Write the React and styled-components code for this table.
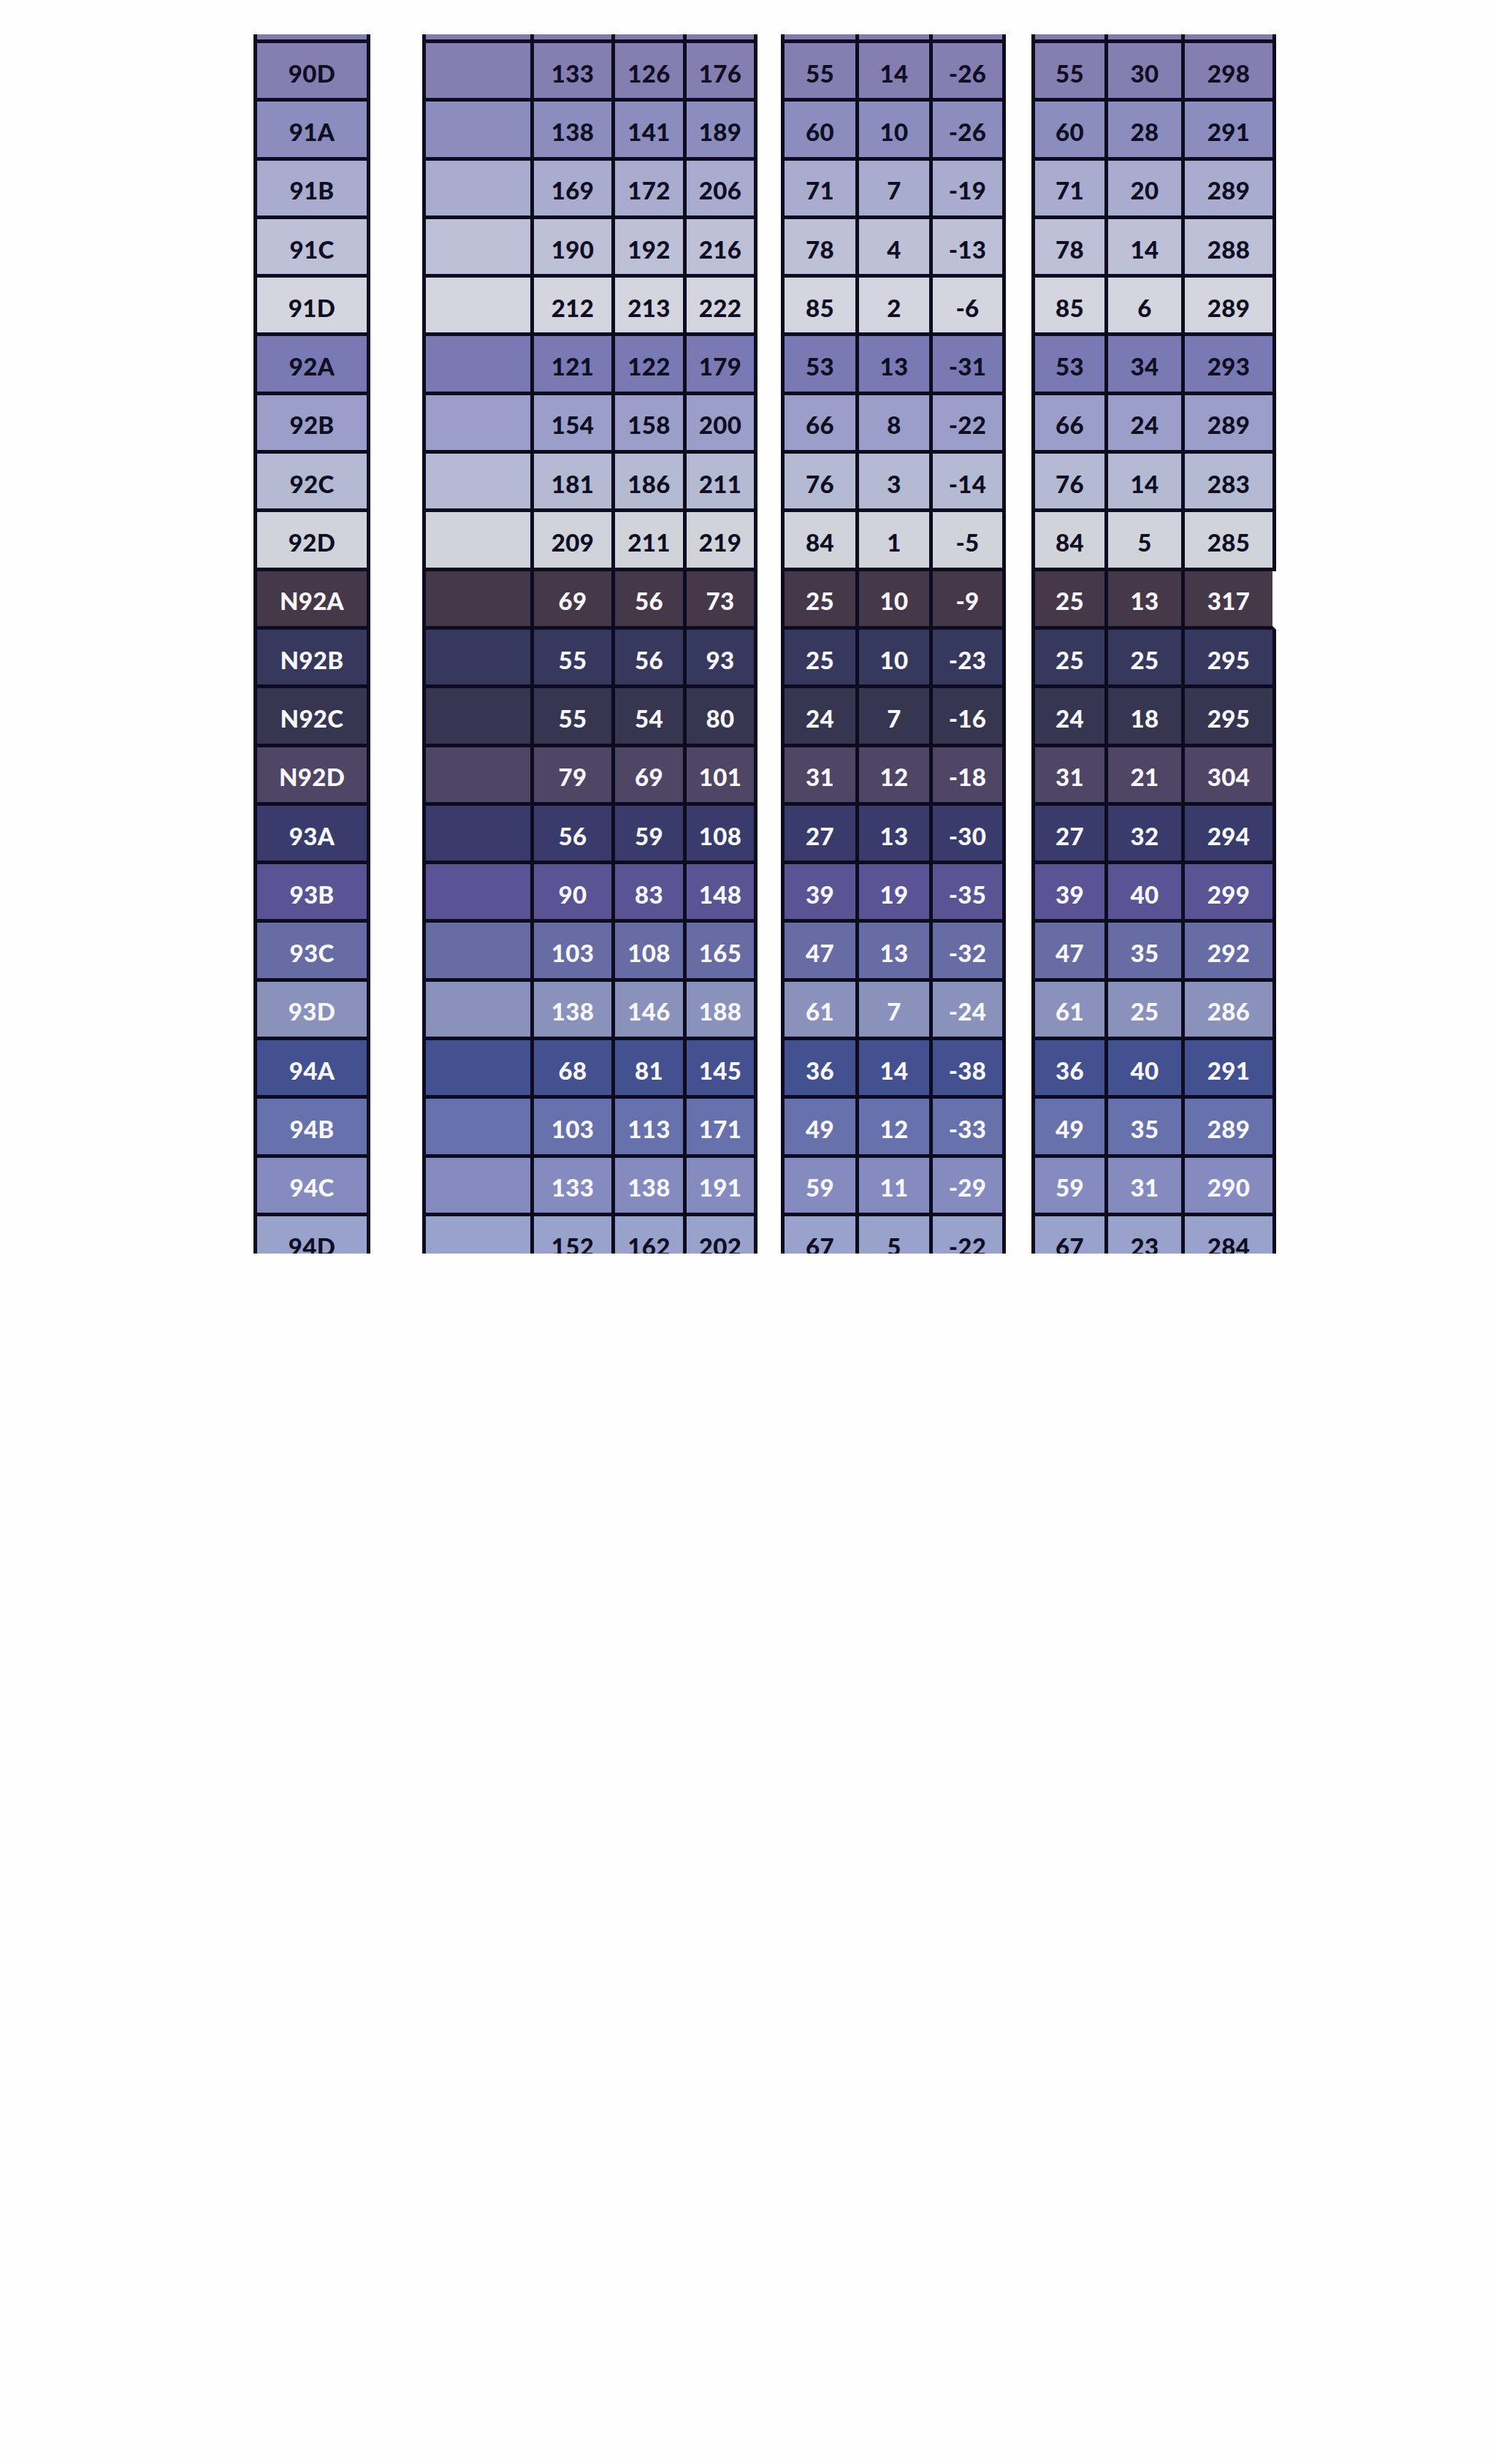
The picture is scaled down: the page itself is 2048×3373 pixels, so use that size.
import React from "react";
import styled, { createGlobalStyle } from "styled-components";

const Global = createGlobalStyle`
  html, body {
    margin: 0;
    padding: 0;
    background: #fefefe;
  }
  body {
    font-family: "Lato", "Open Sans", "Liberation Sans", sans-serif;
  }
`;

const LINE = "#0c0b1f";
const BW = 5;

const rows = [
  ["90D", 133, 126, 176, 55, 14, -26, 55, 30, 298],
  ["91A", 138, 141, 189, 60, 10, -26, 60, 28, 291],
  ["91B", 169, 172, 206, 71, 7, -19, 71, 20, 289],
  ["91C", 190, 192, 216, 78, 4, -13, 78, 14, 288],
  ["91D", 212, 213, 222, 85, 2, -6, 85, 6, 289],
  ["92A", 121, 122, 179, 53, 13, -31, 53, 34, 293],
  ["92B", 154, 158, 200, 66, 8, -22, 66, 24, 289],
  ["92C", 181, 186, 211, 76, 3, -14, 76, 14, 283],
  ["92D", 209, 211, 219, 84, 1, -5, 84, 5, 285],
  ["N92A", 69, 56, 73, 25, 10, -9, 25, 13, 317],
  ["N92B", 55, 56, 93, 25, 10, -23, 25, 25, 295],
  ["N92C", 55, 54, 80, 24, 7, -16, 24, 18, 295],
  ["N92D", 79, 69, 101, 31, 12, -18, 31, 21, 304],
  ["93A", 56, 59, 108, 27, 13, -30, 27, 32, 294],
  ["93B", 90, 83, 148, 39, 19, -35, 39, 40, 299],
  ["93C", 103, 108, 165, 47, 13, -32, 47, 35, 292],
  ["93D", 138, 146, 188, 61, 7, -24, 61, 25, 286],
  ["94A", 68, 81, 145, 36, 14, -38, 36, 40, 291],
  ["94B", 103, 113, 171, 49, 12, -33, 49, 35, 289],
  ["94C", 133, 138, 191, 59, 11, -29, 59, 31, 290],
  ["94D", 152, 162, 202, 67, 5, -22, 67, 23, 284],
];

const lightText = new Set([
  "N92A", "N92B", "N92C", "N92D",
  "93A", "93B", "93C", "93D",
  "94A", "94B", "94C",
]);

const Viewport = styled.div`
  margin-top: 47px;
  margin-left: 347px;
  width: 1400px;
  height: 1669px;
  overflow: hidden;
`;

const Table = styled.div`
  display: flex;
  flex-direction: column;
`;

const Row = styled.div`
  display: flex;
  height: ${(p) => p.$h}px;
  color: ${(p) => (p.$light ? "#f7f7fb" : "#0f0e22")};
`;

const Group = styled.div`
  display: grid;
  grid-template-columns: ${(p) => p.$cols};
  margin-left: ${(p) => p.$offset || 0}px;
  border-left: ${BW}px solid ${LINE};
  height: 100%;
`;

const Cell = styled.div`
  box-sizing: border-box;
  height: 100%;
  display: flex;
  align-items: center;
  justify-content: center;
  padding-top: 7px;
  border-right: ${BW}px solid ${(p) => (p.$open ? "transparent" : LINE)};
  border-bottom: ${BW}px solid ${LINE};
  background-clip: padding-box;
  background-color: ${(p) => p.$bg};
  font-size: 33px;
  font-weight: 900;
  line-height: 1;
  letter-spacing: 0.3px;
  white-space: nowrap;
`;

const LABEL_COLS = "155px";
const SWATCH_COLS = "148px 111px 98px 97px";
const LAB_COLS = "102px 101px 100px";
const LCH_COLS = "100px 105px 125px";

function DataRow({ data, h, hidden, openRight }) {
  const [id, r, g, b, L, a, bb, L2, C, hh] = data;
  const bg = `rgb(${r}, ${g}, ${b})`;
  const t = (v) => (hidden ? "" : v);
  return (
    <Row $h={h} $light={lightText.has(id)}>
      <Group $cols={LABEL_COLS}>
        <Cell $bg={bg}>{t(id)}</Cell>
      </Group>
      <Group $cols={SWATCH_COLS} $offset={71}>
        <Cell $bg={bg} />
        <Cell $bg={bg}>{t(r)}</Cell>
        <Cell $bg={bg}>{t(g)}</Cell>
        <Cell $bg={bg}>{t(b)}</Cell>
      </Group>
      <Group $cols={LAB_COLS} $offset={32}>
        <Cell $bg={bg}>{t(L)}</Cell>
        <Cell $bg={bg}>{t(a)}</Cell>
        <Cell $bg={bg}>{t(bb)}</Cell>
      </Group>
      <Group $cols={LCH_COLS} $offset={35}>
        <Cell $bg={bg}>{t(L2)}</Cell>
        <Cell $bg={bg}>{t(C)}</Cell>
        <Cell $bg={bg} $open={openRight}>{t(hh)}</Cell>
      </Group>
    </Row>
  );
}

export default function App() {
  return (
    <>
      <Global />
      <Viewport>
        <Table>
          <DataRow
            data={["90C", 130, 123, 174, 0, 0, 0, 0, 0, 0]}
            h={12}
            hidden
          />
          {rows.map((row) => (
            <DataRow
              key={row[0]}
              data={row}
              h={80.3}
              openRight={row[0] === "N92A"}
            />
          ))}
        </Table>
      </Viewport>
    </>
  );
}
